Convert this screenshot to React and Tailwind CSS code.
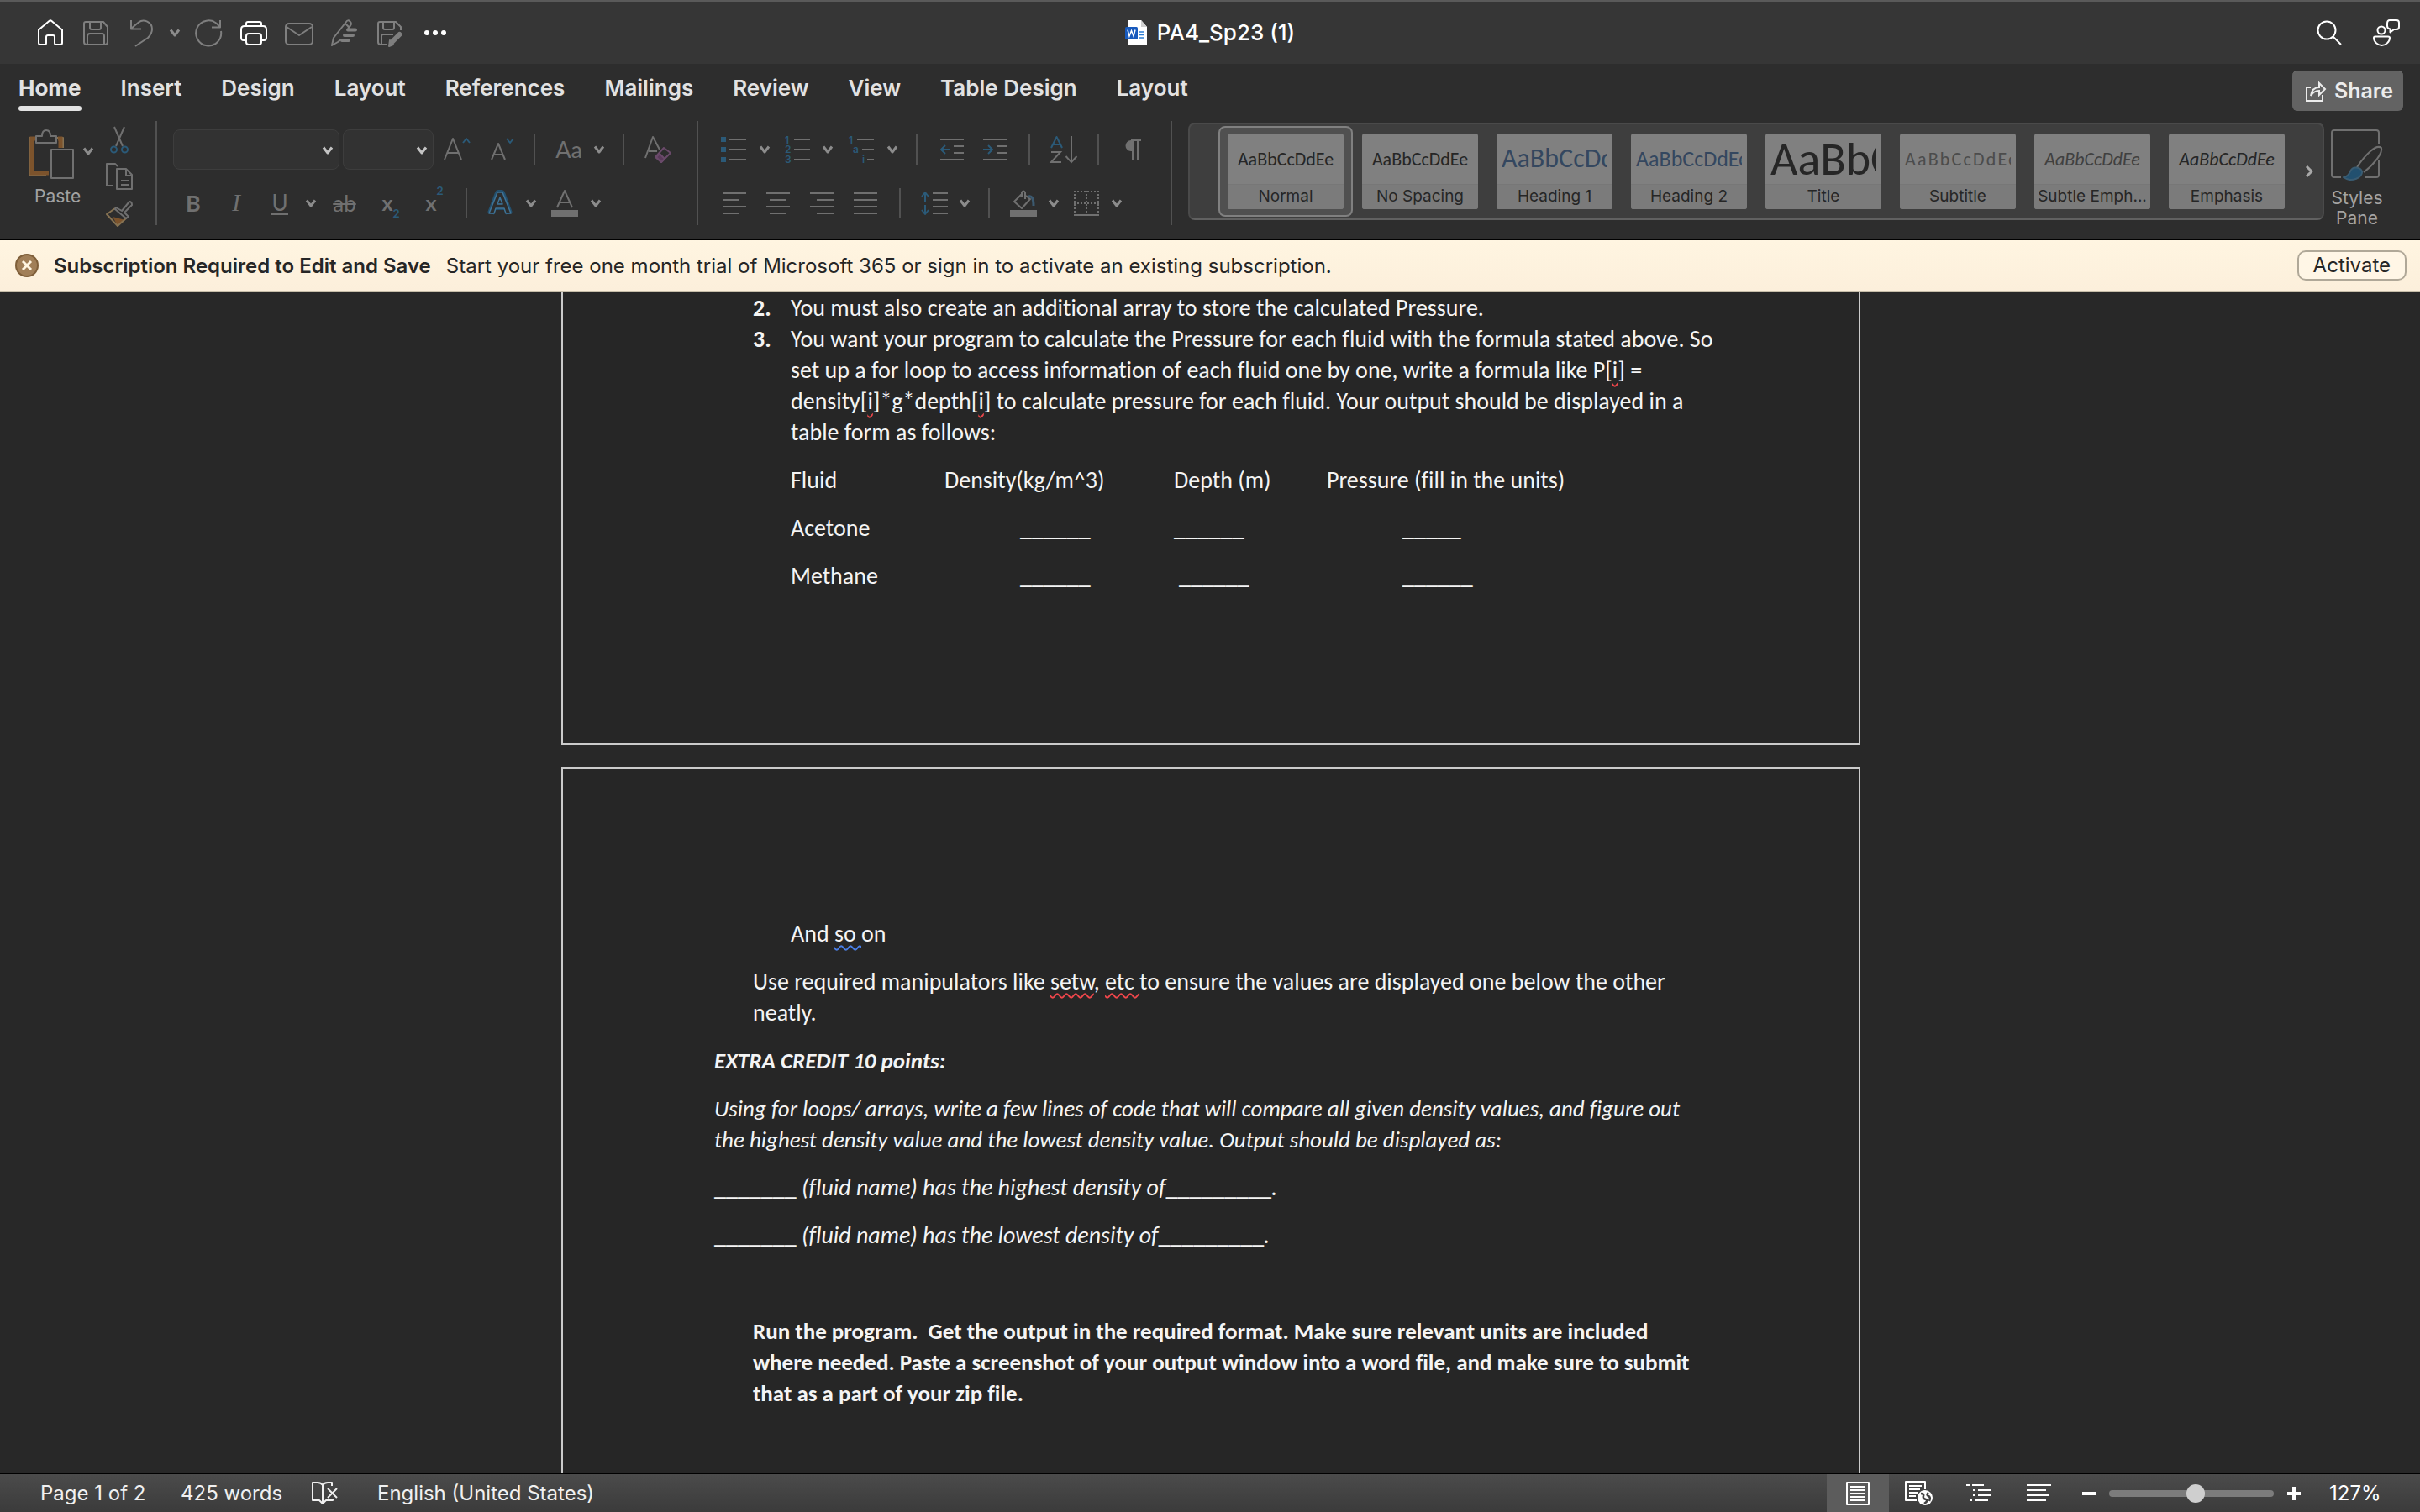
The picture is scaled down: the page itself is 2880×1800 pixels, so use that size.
import * as React from "react"

function Icon({ w = 32, h = 32, sw = 2, children, className = "" }) {
  return (
    <svg
      width={w}
      height={h}
      viewBox={`0 0 ${w} ${h}`}
      fill="none"
      stroke="currentColor"
      strokeWidth={sw}
      strokeLinejoin="round"
      className={`shrink-0 overflow-visible ${className}`}
      aria-hidden="true"
    >
      {children}
    </svg>
  )
}

function Tool({ label, className, children }) {
  return (
    <button
      type="button"
      aria-label={label}
      className={`flex h-12 shrink-0 items-center justify-center ${className}`}
    >
      {children}
    </button>
  )
}

function Chevron({ label = "More options", className }) {
  return (
    <Tool label={label} className={`text-[#8c8c8c] ${className}`}>
      <Icon w={12} h={10} sw={3}>
        <path d="M1 1.5 6 8 11 1.5" />
      </Icon>
    </Tool>
  )
}

function Sep({ className }) {
  return (
    <div className={`flex h-12 shrink-0 items-center justify-center ${className}`}>
      <div className="h-9 w-0.5 bg-[#515151]" />
    </div>
  )
}

function GroupSep() {
  return <div className="h-[124px] w-0.5 shrink-0 bg-[#515151]" />
}

function Lines({ rows }) {
  return (
    <Icon w={28} h={28}>
      {rows.map(([x1, x2], i) => (
        <path key={i} d={`M${x1} ${2 + i * 8}H${x2}`} />
      ))}
    </Icon>
  )
}

function TitleBar() {
  return (
    <header className="grid h-[76px] shrink-0 grid-cols-[1fr_auto_1fr] items-center border-t-2 border-[#5a5a5a] bg-[#363636]">
      <div className="flex items-center pl-[33px] text-[#7f7f7f]">
        <Tool label="Home" className="w-[54px] text-white">
          <Icon>
            <path d="M2 12.5 14.5 2Q16 .8 17.5 2L30 12.5V28Q30 30 28 30H22.500Q21 30 21 28V21Q21 19 19 19H13Q11 19 11 21V28Q11 30 9.500 30H4Q2 30 2 28Z" />
          </Icon>
        </Tool>
        <Tool label="Save" className="w-[54px]">
          <Icon>
            <path d="M2 5Q2 3 4 3H25L30 9V27Q30 30 27 30H5Q2 30 2 27ZM9 3V10Q9 12 11 12H20Q22 12 22 10V3M6 30V20Q6 17 9 17H23Q26 17 26 20V30" />
          </Icon>
        </Tool>
        <Tool label="Undo" className="w-[54px]">
          <Icon>
            <path d="M4 1V11.500H16M4 11 13 3.500C19 -1 29 3 29 11.500C29 16 27 19 24 22L9 32" />
          </Icon>
        </Tool>
        <Chevron label="Undo history" className="w-[26px]" />
        <Tool label="Redo" className="w-[54px]">
          <Icon>
            <path d="M31 14A15 15 0 1 1 26.500 5.500L29.500 9M30 1V9.500H20" />
          </Icon>
        </Tool>
        <Tool label="Print" className="w-[54px] text-white">
          <Icon w={34}>
            <path d="M8 8V5Q8 3 10 3H24Q26 3 26 5V8M8 25H5Q2 25 2 22V12Q2 8 6 8H28Q32 8 32 12V22Q32 25 29 25H26M8 20Q8 17 11 17H23Q26 17 26 20V27Q26 30 23 30H11Q8 30 8 27Z" />
          </Icon>
        </Tool>
        <Tool label="Mail" className="w-[54px]">
          <Icon w={34}>
            <rect x="1" y="5" width="32" height="25" rx="4" />
            <path d="M2 9 17 19 32 9" />
          </Icon>
        </Tool>
        <Tool label="Ink editor" className="w-[54px]">
          <Icon>
            <path d="M12 24 8 27 1 31 3 22 18 3Q20 0 22.500 2.500Q25 5 23 7.500L20 11M17 5 21 9" />
            <path d="M20 12.500H29M16 19H26M13 25H21" strokeWidth="4" strokeLinecap="round" />
          </Icon>
        </Tool>
        <Tool label="Save as" className="w-[54px]">
          <Icon>
            <path d="M13 30H5Q2 30 2 27V5Q2 3 4 3H23L29 9V13M8 3V10Q8 12 10 12H19Q21 12 21 10V3M6 30V20Q6 18 8 18H20" />
            <path d="M18.500 27 27.500 18" strokeWidth="6" strokeLinecap="round" />
            <path d="M15 32 16 25 20 30Z" fill="currentColor" />
          </Icon>
        </Tool>
        <Tool label="More commands" className="w-[54px] text-white">
          <Icon w={28} h={8}>
            <g fill="currentColor" stroke="none">
              <circle cx="4" cy="4" r="3" />
              <circle cx="14" cy="4" r="3" />
              <circle cx="24" cy="4" r="3" />
            </g>
          </Icon>
        </Tool>
      </div>
      <div className="flex items-center gap-3 text-white">
        <svg width="26" height="30" viewBox="0 0 26 30" aria-hidden="true">
          <path d="M4 0H19L26 8V30H4Z" fill="#fff" />
          <path d="M19 0V8H26Z" fill="#cfcfcf" />
          <path d="M16 14H23M16 17.500H23M16 21H23" stroke="#2b7cd3" strokeWidth="1.500" />
          <rect y="8" width="15" height="15" rx="1.500" fill="#185abd" />
          <path d="M3 11.500 5 19 7.500 12.500 10 19 12 11.500" stroke="#fff" strokeWidth="1.500" fill="none" />
        </svg>
        <h1 className="text-[26px] leading-8 font-medium">PA4_Sp23 (1)</h1>
      </div>
      <div className="flex items-center justify-end gap-9 pr-6 text-white">
        <button type="button" aria-label="Search">
          <Icon sw={2}>
            <circle cx="13" cy="13" r="10.500" />
            <path d="M20.500 20.500 30 30" />
          </Icon>
        </button>
        <button type="button" aria-label="Account">
          <Icon>
            <circle cx="10" cy="13" r="4.500" />
            <path d="M1 22Q1 20.500 2.500 20.500H18Q20 20.500 20 22C20 27 15 31 10.500 31S1 27 1 22Z" />
            <path d="M17 5Q17 1 20 1H28Q31 1 31 4V9Q31 12 28 12H25L20.500 15.500V11.500Q17 11 17 8Z" />
          </Icon>
        </button>
      </div>
    </header>
  )
}

const TABS = ["Home", "Insert", "Design", "Layout", "References", "Mailings", "Review", "View", "Table Design", "Layout"]

function Tabs() {
  return (
    <div className="flex items-start justify-between">
      <nav className="flex gap-[47px] pt-3 pl-[22px] text-[26px] leading-[34px] text-[#e2e2e2]">
        {TABS.map((tab, i) => (
          <a
            key={i}
            href="#"
            className={
              i === 0
                ? "flex flex-col gap-1 font-bold after:h-1.5 after:rounded-full after:bg-[#e2e2e2]"
                : "font-semibold"
            }
          >
            {tab}
          </a>
        ))}
      </nav>
      <button
        type="button"
        className="mt-2 mr-5 flex h-12 items-center gap-2.5 rounded-md border-t border-[#7c7c7c] bg-[#636363] pr-3 pl-4 text-[25px] font-semibold text-[#ececec]"
      >
        <Icon w={24} h={24}>
          <path d="M6 7H1V23H20V16" strokeLinejoin="miter" />
          <path d="M6 17C7 10 11 7 16 7V2L23 9 16 16V11C11 11 9 13 6 17Z" strokeLinejoin="miter" />
        </Icon>
        Share
      </button>
    </div>
  )
}

function ClipboardGroup() {
  return (
    <div className="flex w-[185px] shrink-0 pl-[33px]">
      <div className="flex w-20 flex-col">
        <div className="flex items-center">
          <button type="button" aria-label="Paste" className="pt-2">
            <Icon w={56} h={64}>
              <path d="M22 56H2V12H12M34 12H42V24" stroke="#867252" strokeWidth="2" />
              <path d="M25 54H5V13H10M36 13H39V24" stroke="#7c532c" strokeWidth="5" strokeLinejoin="miter" />
              <path d="M10 18V10H17Q17 3 22 3T27 10H34V18Z" fill="#2d2d2d" stroke="#707070" />
              <path d="M28 26H54V60H28Z" fill="#2d2d2d" stroke="#707070" />
            </Icon>
          </button>
          <Chevron label="Paste options" className="ml-2 w-4" />
        </div>
        <span className="mt-1.5 pl-2 text-[21px] leading-6 text-[#a3a3a3]">Paste</span>
      </div>
      <div className="ml-[13px] flex flex-col gap-3 pt-1.5 text-[#707070]">
        <button type="button" aria-label="Cut">
          <Icon w={32} h={32}>
            <path d="M10 1 20 24M22 1 12 24" />
            <g stroke="#2b5a78">
              <circle cx="9.500" cy="28" r="3.500" />
              <circle cx="22.500" cy="28" r="3.500" />
            </g>
          </Icon>
        </button>
        <button type="button" aria-label="Copy">
          <Icon w={32} h={32}>
            <path d="M9 27H1V1H11L14 4" />
            <path d="M13 7H24L31 14V31H13ZM24 7V15H31M18 21H27M18 26H27" />
          </Icon>
        </button>
        <button type="button" aria-label="Format painter">
          <Icon w={32} h={32}>
            <path d="M8 20 23 24 14 31Z" fill="#7c532c" stroke="none" />
            <path d="M11 10 1 17 14 31 25 21" stroke="#867252" />
            <path d="M12 9 19 13 28 2Q31 2 31 6L22 15 27 20 24 22 11 11Z" />
          </Icon>
        </button>
      </div>
    </div>
  )
}

function Combo({ label, className }) {
  return (
    <div className={`relative h-12 shrink-0 ${className}`}>
      <select
        aria-label={label}
        className="h-full w-full appearance-none rounded-lg border border-[#3d3d3d] bg-[#323232]"
      />
      <Icon w={12} h={10} sw={3} className="pointer-events-none absolute top-5 right-2 text-[#c4c4c4]">
        <path d="M1 1.500 6 8 11 1.500" />
      </Icon>
    </div>
  )
}

function FontGroup() {
  return (
    <div className="flex w-[642px] shrink-0 flex-col gap-4 pt-2.5 pl-[19px] text-[#707070]">
      <div className="flex">
        <Combo label="Font" className="mr-1 w-[198px]" />
        <Combo label="Font size" className="w-[108px]" />
        <Tool label="Increase font size" className="w-14">
          <Icon>
            <path d="M1 28 11 3 21 28M4.500 20H17.500" />
            <path d="M23 8 27 3 31 8" stroke="#2b5a78" />
          </Icon>
        </Tool>
        <Tool label="Decrease font size" className="w-[52px]">
          <Icon>
            <path d="M3 28 11 9 19 28M5.500 22H16.500" />
            <path d="M21 3 25 8 29 3" stroke="#2b5a78" />
          </Icon>
        </Tool>
        <Sep className="w-6" />
        <Tool label="Change case" className="w-[58px] font-[Lato] text-[27px]">
          Aa
        </Tool>
        <Chevron className="w-3.5" />
        <Sep className="w-11" />
        <Tool label="Clear formatting" className="w-[38px]">
          <Icon>
            <path d="M1 26 10 1 18 16M5 18H15" />
            <path d="M13 25 23 14 31 20 20 31Z" stroke="#6a4a6a" />
            <path d="M14 25 18 21 24 27 20 31Z" fill="#5a3a5a" stroke="#6a4a6a" />
          </Icon>
        </Tool>
      </div>
      <div className="flex">
        <Tool label="Bold" className="w-12 font-[Lato] text-[27px] font-bold">B</Tool>
        <Tool label="Italic" className="w-[54px] font-['Liberation_Serif'] text-[29px] italic">I</Tool>
        <Tool label="Underline" className="w-[50px] font-[Lato] text-[26px]">
          <span className="border-b-2 border-[#707070] leading-[26px]">U</span>
        </Tool>
        <Chevron className="w-6" />
        <Tool label="Strikethrough" className="w-14 font-[Lato] text-[26px]">
          <s>ab</s>
        </Tool>
        <Tool label="Subscript" className="w-[54px] font-[Lato] text-[25px] font-bold">
          x<sub className="pt-4 text-sm text-[#2b5a78]">2</sub>
        </Tool>
        <Tool label="Superscript" className="w-[50px] font-[Lato] text-[25px] font-bold">
          x<sup className="pb-4 text-sm text-[#2b5a78]">2</sup>
        </Tool>
        <Sep className="w-[26px]" />
        <Tool label="Text effects" className="w-[54px]">
          <Icon>
            <path d="M5 28 14 4H18L27 28M9 20H23" stroke="#23506e" strokeWidth="8" />
            <path d="M3 28 13 3H19L29 28H23L21 22H11L9 28ZM13 17H19L16 9Z" stroke="#3f7396" strokeWidth="1.500" fill="#2d2d2d" />
          </Icon>
        </Tool>
        <Chevron className="w-5" />
        <Tool label="Font color" className="w-[60px]">
          <Icon>
            <path d="M7 21 16 1 25 21M10 15H22" />
            <path d="M0 28H32" strokeWidth="8" />
          </Icon>
        </Tool>
        <Chevron className="w-3.5" />
      </div>
    </div>
  )
}

function ListIcon({ marks }) {
  return (
    <Icon>
      <g fill="#2b5a78" stroke="none" fontFamily="Inter" fontSize="12" fontWeight="600">
        {marks.map(([mark, x, y], i) => (
          <text key={i} x={x} y={y}>
            {mark}
          </text>
        ))}
      </g>
      {marks.map(([, , , start], i) => (
        <path key={i} d={`M${start} ${4 + i * 12}H31`} />
      ))}
    </Icon>
  )
}

function ParagraphGroup() {
  return (
    <div className="flex w-[562px] shrink-0 flex-col gap-4 pt-2.5 pl-[19px] text-[#707070]">
      <div className="flex">
        <Tool label="Bullets" className="w-[46px]">
          <Icon>
            <path d="M1 4H7M1 16H7M1 28H7" stroke="#2b5a78" strokeWidth="6" />
            <path d="M11 4H31M11 16H31M11 28H31" />
          </Icon>
        </Tool>
        <Chevron className="w-7" />
        <Tool label="Numbering" className="w-[50px]">
          <ListIcon marks={[["1", 1, 9, 12], ["2", 1, 20, 12], ["3", 1, 32, 12]]} />
        </Tool>
        <Chevron className="w-[22px]" />
        <Tool label="Multilevel list" className="w-[58px]">
          <ListIcon marks={[["1", 1, 9, 11], ["a", 6, 20, 17], ["i", 17, 32, 23]]} />
        </Tool>
        <Chevron className="w-4" />
        <Sep className="w-[42px]" />
        <Tool label="Decrease indent" className="w-[42px]">
          <Icon w={28} h={28}>
            <path d="M0 2H28M16 10H28M16 18H28M0 26H28" />
            <path d="M12 14H1M6 9 1 14 6 19" stroke="#2b5a78" />
          </Icon>
        </Tool>
        <Tool label="Increase indent" className="w-[60px]">
          <Icon w={28} h={28}>
            <path d="M0 2H28M16 10H28M16 18H28M0 26H28" />
            <path d="M0 14H11M6 9 11 14 6 19" stroke="#2b5a78" />
          </Icon>
        </Tool>
        <Sep className="w-[22px]" />
        <Tool label="Sort" className="w-[60px]">
          <Icon>
            <path d="M1 14 7.500 1 14 14M3 10H12" stroke="#2b5a78" />
            <path d="M1 19H12L1 31H13M25 0V30M18.500 24 25 31 31.500 24" strokeLinejoin="miter" />
          </Icon>
        </Tool>
        <Sep className="w-[22px]" />
        <Tool label="Show formatting marks" className="w-[60px]">
          <Icon w={20} h={24}>
            <path d="M20 1H8A6.500 6.500 0 0 0 8 14H10V1Z" fill="currentColor" stroke="none" />
            <path d="M10 0V24M16 0V24M8 1H20" />
          </Icon>
        </Tool>
      </div>
      <div className="flex">
        <Tool label="Align left" className="w-12">
          <Lines rows={[[0, 28], [0, 20], [0, 28], [0, 20]]} />
        </Tool>
        <Tool label="Align center" className="w-14">
          <Lines rows={[[0, 28], [4, 24], [0, 28], [4, 24]]} />
        </Tool>
        <Tool label="Align right" className="w-12">
          <Lines rows={[[0, 28], [8, 28], [0, 28], [8, 28]]} />
        </Tool>
        <Tool label="Justify" className="w-14">
          <Lines rows={[[0, 28], [0, 28], [0, 28], [0, 28]]} />
        </Tool>
        <Sep className="w-[26px]" />
        <Tool label="Line spacing" className="w-14">
          <Icon h={28}>
            <path d="M14 2H32M14 10H32M14 18H32M14 26H32" />
            <path d="M5 12V1M1 6 5 1 9 6M5 16V27M1 22 5 27 9 22" stroke="#2b5a78" />
          </Icon>
        </Tool>
        <Chevron className="w-4" />
        <Sep className="w-[42px]" />
        <Tool label="Shading" className="w-10">
          <Icon>
            <path d="M14 5 5 14 14 22 24 11 19 7M14 9V3Q16 0 18 3V11" />
            <path d="M22 8Q28 6 28 19" stroke="#3c5a70" strokeWidth="3" />
            <path d="M0 28H32" strokeWidth="8" />
          </Icon>
        </Tool>
        <Chevron className="w-8" />
        <Tool label="Borders" className="w-[46px]">
          <Icon w={30} h={30}>
            <path d="M0 1H30M1 0V26M29 0V26M15 0V26M0 15H30" strokeDasharray="2 2" />
            <path d="M0 29H30" />
          </Icon>
        </Tool>
        <Chevron className="w-[26px]" />
      </div>
    </div>
  )
}

const STYLES = [
  { name: "Normal", sample: "text-[22px] justify-center text-[#262626]", selected: true },
  { name: "No Spacing", sample: "text-[22px] justify-center text-[#262626]" },
  { name: "Heading 1", sample: "text-[32px] text-[#34475f]" },
  { name: "Heading 2", sample: "text-[26px] text-[#34475f]" },
  { name: "Title", sample: "text-[56px] text-[#262626]" },
  { name: "Subtitle", sample: "text-[22px] tracking-widest text-[#4c4c4c]" },
  { name: "Subtle Emph...", sample: "text-[22px] justify-center italic text-[#404040]" },
  { name: "Emphasis", sample: "text-[22px] justify-center italic text-[#262626]" },
]

function StyleGallery() {
  return (
    <div className="mt-0.5 ml-[19px] flex h-[116px] min-w-0 flex-1 items-center rounded-lg border-2 border-t-[#4a4a4a] border-r-[#4a4a4a] border-b-[#616161] border-l-[#4a4a4a] bg-[#3e3e3e] pl-[34px]">
      {STYLES.map((style) => (
        <button
          key={style.name}
          type="button"
          className={
            style.selected
              ? "h-[108px] w-40 shrink-0 rounded-lg border-2 border-[#808080] bg-[#505050] px-[9px] py-[7px]"
              : "h-[108px] w-40 shrink-0 border-2 border-transparent px-[9px] py-[7px]"
          }
        >
          <span className="flex h-[90px] flex-col overflow-hidden rounded-[3px] bg-[#808080]">
            <span
              className={`mx-1.5 flex h-[60px] items-center overflow-hidden font-[Calibri,Carlito,Lato,sans-serif] whitespace-nowrap ${style.sample}`}
            >
              AaBbCcDdEe
            </span>
            <span className="h-[30px] border-t border-[#777777] bg-[#7b7b7b] text-[19px] leading-[28px] whitespace-nowrap text-[#262626]">
              {style.name}
            </span>
          </span>
        </button>
      ))}
      <button type="button" aria-label="More styles" className="ml-auto pr-3 text-[#a8a8a8]">
        <Icon w={8} h={14} sw={3}>
          <path d="M1 1 7 7 1 13" />
        </Icon>
      </button>
    </div>
  )
}

function Ribbon() {
  return (
    <section className="h-[210px] shrink-0 border-b-2 border-black bg-[#2d2d2d]">
      <Tabs />
      <div className="mt-3 flex items-start">
        <ClipboardGroup />
        <GroupSep />
        <FontGroup />
        <GroupSep />
        <ParagraphGroup />
        <GroupSep />
        <StyleGallery />
        <button
          type="button"
          className="flex w-[114px] shrink-0 flex-col items-center pt-2.5 pr-9 text-[21px] leading-6 text-[#a3a3a3]"
        >
          <Icon w={64} h={64} className="mb-1.5 text-[#707070]">
            <path d="M13 57H5Q2 57 2 54V4Q2 1 5 1H55Q58 1 58 4V18M58 36V54Q58 57 55 57H42" />
            <path d="M32 45C42 30 55 17 61 22C63 28 52 42 40 51" />
            <path d="M16 57Q22 56 24 50C27 43 36 45 38 50C39 57 26 64 16 57Z" fill="#22506f" stroke="#3a5c72" />
          </Icon>
          <span>Styles</span>
          <span>Pane</span>
        </button>
      </div>
    </section>
  )
}

function Banner() {
  return (
    <div className="flex h-[62px] shrink-0 items-center border-b-2 border-[#c6bda9] bg-linear-to-b from-[#fff5e1] to-[#fcefdb] pr-4 pl-[18px] text-2xl text-[#262626]">
      <button type="button" aria-label="Dismiss">
        <Icon w={28} h={28} sw={3}>
          <circle cx="14" cy="14" r="13" fill="#a17f58" stroke="#7f5f3a" strokeWidth="2" />
          <path d="M9 9 19 19M19 9 9 19" stroke="#fff5e1" />
        </Icon>
      </button>
      <div className="flex gap-[18px] pt-0.5 pl-[18px]">
        <strong className="font-semibold">Subscription Required to Edit and Save</strong>
        <p>Start your free one month trial of Microsoft 365 or sign in to activate an existing subscription.</p>
      </div>
      <button
        type="button"
        className="ml-auto h-9 rounded-[10px] border-2 border-[#b0a898] bg-[#fff6e6] px-[17px] leading-8"
      >
        Activate
      </button>
    </div>
  )
}

function Spell({ children, grammar }) {
  return (
    <span
      className={
        grammar
          ? "underline decoration-[#4a7fe8] decoration-wavy decoration-2 underline-offset-4"
          : "underline decoration-[#f0464b] decoration-wavy decoration-2 underline-offset-4"
      }
    >
      {children}
    </span>
  )
}

function FluidTable() {
  return (
    <table className="mt-5 ml-[91px] text-left">
      <thead>
        <tr className="h-[57px] align-top *:font-normal">
          <th className="w-[183px]">Fluid</th>
          <th className="w-[273px]">Density(kg/m^3)</th>
          <th className="w-[182px]">Depth (m)</th>
          <th>Pressure (fill in the units)</th>
        </tr>
      </thead>
      <tbody>
        <tr className="h-[57px] align-top">
          <td>Acetone</td>
          <td className="pl-[90px]">______</td>
          <td>______</td>
          <td className="pl-[90px]">_____</td>
        </tr>
        <tr className="h-[57px] align-top">
          <td>Methane</td>
          <td className="pl-[90px]">______</td>
          <td className="pl-1.5">______</td>
          <td className="pl-[90px]">______</td>
        </tr>
      </tbody>
    </table>
  )
}

function Document() {
  return (
    <main className="flex min-h-0 flex-1 flex-col items-center overflow-hidden bg-[#282828] pl-0.5 font-[Calibri,Carlito,Lato,sans-serif] text-[28px] leading-[37px] whitespace-nowrap text-[#f4f4f4] [font-variant-ligatures:none]">
      <article className="w-full max-w-[1546px] shrink-0 border-x-2 border-b-2 border-[#cbcbcb] bg-[#262626] pb-[161px] pl-[180px]">
        <ol start={2} className="ml-[46px]">
          <li className="flex">
            <span className="w-[45px] font-bold">2.</span>
            <p>You must also create an additional array to store the calculated Pressure.</p>
          </li>
          <li className="flex">
            <span className="w-[45px] font-bold">3.</span>
            <p>
              You want your program to calculate the Pressure for each fluid with the formula stated above. So
              <br />
              set up a for loop to access information of each fluid one by one, write a formula like P[<Spell>i</Spell>] =
              <br />
              density[<Spell>i</Spell>]*g*depth[<Spell>i</Spell>] to calculate pressure for each fluid. Your output should be displayed in a
              <br />
              table form as follows:
            </p>
          </li>
        </ol>
        <FluidTable />
      </article>
      <article className="mt-[26px] flex w-full max-w-[1546px] shrink-0 flex-col gap-5 border-2 border-[#cbcbcb] bg-[#262626] pt-[178px] pb-[180px] pl-[180px]">
        <p className="ml-[91px]">
          And <Spell grammar>so </Spell>on
        </p>
        <p className="ml-[46px]">
          Use required manipulators like <Spell>setw</Spell>, <Spell>etc </Spell>to ensure the values are displayed one below the other
          <br />
          neatly.
        </p>
        <p className="text-[27px] font-bold italic">EXTRA CREDIT 10 points:</p>
        <p className="text-[27px] italic">
          Using for loops/ arrays, write a few lines of code that will compare all given density values, and figure out
          <br />
          the highest density value and the lowest density value. Output should be displayed as:
        </p>
        <p className="italic">
          <span className="not-italic">_______</span> (fluid name) has the highest density of
          <span className="not-italic">_________</span>.
        </p>
        <p className="mb-[57px] italic">
          <span className="not-italic">_______</span> (fluid name) has the lowest density of
          <span className="not-italic">_________</span>.
        </p>
        <p className="ml-[46px] text-[27px] font-bold">
          Run the program.&nbsp; Get the output in the required format. Make sure relevant units are included
          <br />
          where needed. Paste a screenshot of your output window into a word file, and make sure to submit
          <br />
          that as a part of your zip file.
        </p>
      </article>
    </main>
  )
}

function StatusBar() {
  return (
    <footer className="flex h-[46px] shrink-0 items-center justify-between border-t border-black bg-linear-to-b from-[#4b4b4b] to-[#3b3b3b] text-2xl text-[#f0f0f0]">
      <div className="flex items-center pl-12">
        <span className="w-[167px]">Page 1 of 2</span>
        <span className="w-[155px]">425 words</span>
        <button type="button" aria-label="Proofing" className="w-[79px]">
          <Icon w={34} h={28}>
            <path d="M14 4Q12 1 8 1H2V22H10L14 26 18 22H26V20M14 4V26M14 4Q16 1 20 1H25V5" />
            <path d="M20 8 31 19M31 8 20 19" />
          </Icon>
        </button>
        <span>English (United States)</span>
      </div>
      <div className="flex h-full items-center text-white">
        <button type="button" aria-label="Print layout" className="flex h-full w-[74px] items-center justify-center bg-[#5c5c5c]">
          <Icon w={28} h={28}>
            <path d="M1 1H27V27H1ZM5 6H23M5 10H23M5 14H23M5 18H23M5 22H23" />
          </Icon>
        </button>
        <button type="button" aria-label="Web layout" className="flex w-[72px] justify-center">
          <Icon w={34} h={30}>
            <path d="M14 23H1V1H24V10M5 6H20M5 10H18M5 14H15M5 18H13" />
            <circle cx="24" cy="20" r="9" fill="#fff" stroke="none" />
            <path d="M19 15Q23 15 22 18T25 22 23 27M28 14Q25 17 28 18T29 24" stroke="#414141" strokeWidth="2.500" />
          </Icon>
        </button>
        <button type="button" aria-label="Outline" className="flex w-[70px] justify-center">
          <Icon w={30} h={24}>
            <path d="M0 2H4M7 2H21M8 8H11M14 8H30M8 14H11M14 14H30M4 20H7M10 20H26" />
          </Icon>
        </button>
        <button type="button" aria-label="Draft" className="flex w-[72px] justify-center">
          <Icon w={30} h={24}>
            <path d="M1 2H30M1 8H24M1 14H28M1 20H24" />
          </Icon>
        </button>
        <button type="button" aria-label="Zoom out" className="flex w-12 justify-center">
          <Icon w={16} h={16} sw={4}>
            <path d="M0 8H16" />
          </Icon>
        </button>
        <input
          type="range"
          aria-label="Zoom"
          min="0"
          max="100"
          defaultValue="53"
          className="h-2 w-[196px] appearance-none rounded-full bg-[#7c7c7c] [&::-webkit-slider-thumb]:size-[22px] [&::-webkit-slider-thumb]:appearance-none [&::-webkit-slider-thumb]:rounded-full [&::-webkit-slider-thumb]:bg-[#cfcfcf]"
        />
        <button type="button" aria-label="Zoom in" className="flex w-12 justify-center">
          <Icon w={16} h={16} sw={4}>
            <path d="M0 8H16M8 0V16" />
          </Icon>
        </button>
        <span className="w-[126px] pl-[18px]">127%</span>
      </div>
    </footer>
  )
}

export default function App() {
  return (
    <div className="flex h-screen flex-col overflow-hidden font-[Inter,sans-serif]">
      <TitleBar />
      <Ribbon />
      <Banner />
      <Document />
      <StatusBar />
    </div>
  )
}
